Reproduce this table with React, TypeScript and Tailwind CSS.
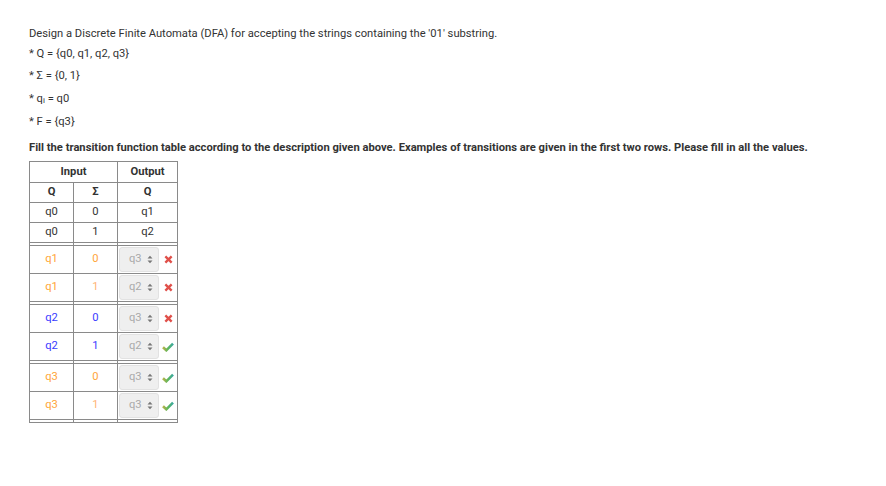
import React from 'react';

type Row = { q: string; s: string; out: string; color: string; sColor?: string; ok?: boolean };

const groups: Row[][] = [
  [
    { q: 'q1', s: '0', out: 'q3', color: 'text-[#ffa53a]', ok: false },
    { q: 'q1', s: '1', out: 'q2', color: 'text-[#ffa53a]', sColor: 'text-[#ffb476]', ok: false },
  ],
  [
    { q: 'q2', s: '0', out: 'q3', color: 'text-[#3a3aff]', ok: false },
    { q: 'q2', s: '1', out: 'q2', color: 'text-[#3a3aff]', ok: true },
  ],
  [
    { q: 'q3', s: '0', out: 'q3', color: 'text-[#ffa53a]', ok: true },
    { q: 'q3', s: '1', out: 'q3', color: 'text-[#ffa53a]', sColor: 'text-[#ffb476]', ok: true },
  ],
];

const Cross = () => (
  <svg width="9" height="9" viewBox="0 0 10 10" className="shrink-0">
    <path d="M1.5 1.5 L8.5 8.5 M8.5 1.5 L1.5 8.5" stroke="#e0504a" strokeWidth="2.6" strokeLinecap="butt" />
  </svg>
);

const Check = () => (
  <svg width="12" height="10" viewBox="0 0 12 10" className="shrink-0">
    <defs>
      <linearGradient id="chk" x1="0" y1="0" x2="1" y2="0">
        <stop offset="0" stopColor="#b5b14a" />
        <stop offset="0.5" stopColor="#5cb85c" />
        <stop offset="1" stopColor="#3aa8a0" />
      </linearGradient>
    </defs>
    <path d="M1 5.2 L4.3 8.3 L11 1.6" fill="none" stroke="url(#chk)" strokeWidth="2.6" />
  </svg>
);

const Spacer = () => (
  <tr className="h-[3px]">
    <td className="h-[3px] p-0 border border-[#8a8a8a]" />
    <td className="h-[3px] p-0 border border-[#8a8a8a]" />
    <td className="h-[3px] p-0 border border-[#8a8a8a]" />
  </tr>
);

const cell = 'border border-[#8a8a8a] p-0 text-center';

export default function App() {
  return (
    <div className="min-h-screen bg-white pl-[29px] text-[11.2px] text-[#333] font-['Roboto',sans-serif]">
      <div className="pt-[26px] h-[42px] leading-4">
        Design a Discrete Finite Automata (DFA) for accepting the strings containing the '01' substring.
      </div>
      <div className="mt-[4px] h-4 leading-4">* Q = {'{'}q0, q1, q2, q3{'}'}</div>
      <div className="mt-[6px] h-4 leading-4">* Σ = {'{'}0, 1{'}'}</div>
      <div className="mt-[7px] h-4 leading-4">
        * q<sub className="text-[8px] relative top-[1px]">i</sub> = q0
      </div>
      <div className="mt-[7px] h-4 leading-4">* F = {'{'}q3{'}'}</div>
      <div className="mt-[10px] h-4 leading-4 font-bold">
        Fill the transition function table according to the description given above. Examples of transitions are given in the first two rows. Please fill in all the values.
      </div>

      <table className="mt-[5px] border-collapse w-[148px] table-fixed">
        <colgroup>
          <col className="w-[44px]" />
          <col className="w-[44px]" />
          <col className="w-[60px]" />
        </colgroup>
        <tbody>
          <tr className="h-[21px] font-bold">
            <td colSpan={2} className={cell}>Input</td>
            <td className={cell}>Output</td>
          </tr>
          <tr className="h-[20px] font-bold">
            <td className={cell}>Q</td>
            <td className={cell}>Σ</td>
            <td className={cell}>Q</td>
          </tr>
          <tr className="h-[20px]">
            <td className={cell}>q0</td>
            <td className={cell}>0</td>
            <td className={cell}>q1</td>
          </tr>
          <tr className="h-[20px]">
            <td className={cell}>q0</td>
            <td className={cell}>1</td>
            <td className={cell}>q2</td>
          </tr>
          <Spacer />
          {groups.map((g, gi) => (
            <React.Fragment key={gi}>
              {g.map((r, ri) => (
                <tr key={ri} className="h-[28px]">
                  <td className={`${cell} ${r.color}`}>{r.q}</td>
                  <td className={`${cell} ${r.sColor ?? r.color}`}>{r.s}</td>
                  <td className="border border-[#8a8a8a] p-0">
                    <div className="flex items-center">
                      <div className="ml-[1px] w-[40px] h-[25px] rounded-[3px] bg-[#efefef] border border-[#e2e2e2] flex items-center pl-[9px] text-[#aaa]">
                        <span>{r.out}</span>
                        <span className="ml-[5px] flex flex-col items-center leading-none">
                          <svg width="6" height="9" viewBox="0 0 6 9">
                            <path d="M0.5 3.6 L3 0.8 L5.5 3.6 Z M0.5 5.4 L3 8.2 L5.5 5.4 Z" fill="#777" />
                          </svg>
                        </span>
                      </div>
                      <div className="ml-[3px] w-[12px] flex justify-center">{r.ok ? <Check /> : <Cross />}</div>
                    </div>
                  </td>
                </tr>
              ))}
              <Spacer />
            </React.Fragment>
          ))}
        </tbody>
      </table>
    </div>
  );
}
